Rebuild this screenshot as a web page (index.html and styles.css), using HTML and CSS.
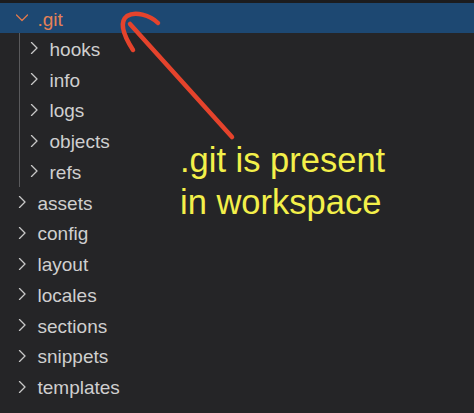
FILE: index.html
```html
<!DOCTYPE html>
<html>
<head>
<meta charset="utf-8">
<link rel="stylesheet" href="styles.css">
</head>
<body>
<div class="explorer">
  <div class="topstrip"></div>
  <div class="row level0 selected">
    <span class="twisty"><svg viewBox="0 0 12 12" width="12" height="12"><path d="M0.5 3 L6 8.5 L11.5 3" class="chev orange"/></svg></span>
    <span class="label git">.git</span>
  </div>
  <div class="children">
    <div class="row level1"><span class="twisty"><svg viewBox="0 0 12 12" width="12" height="12"><path d="M3.5 0.5 L9 6 L3.5 11.5" class="chev"/></svg></span><span class="label">hooks</span></div>
    <div class="row level1"><span class="twisty"><svg viewBox="0 0 12 12" width="12" height="12"><path d="M3.5 0.5 L9 6 L3.5 11.5" class="chev"/></svg></span><span class="label">info</span></div>
    <div class="row level1"><span class="twisty"><svg viewBox="0 0 12 12" width="12" height="12"><path d="M3.5 0.5 L9 6 L3.5 11.5" class="chev"/></svg></span><span class="label">logs</span></div>
    <div class="row level1"><span class="twisty"><svg viewBox="0 0 12 12" width="12" height="12"><path d="M3.5 0.5 L9 6 L3.5 11.5" class="chev"/></svg></span><span class="label">objects</span></div>
    <div class="row level1"><span class="twisty"><svg viewBox="0 0 12 12" width="12" height="12"><path d="M3.5 0.5 L9 6 L3.5 11.5" class="chev"/></svg></span><span class="label">refs</span></div>
  </div>
  <div class="row level0"><span class="twisty"><svg viewBox="0 0 12 12" width="12" height="12"><path d="M3.5 0.5 L9 6 L3.5 11.5" class="chev"/></svg></span><span class="label">assets</span></div>
  <div class="row level0"><span class="twisty"><svg viewBox="0 0 12 12" width="12" height="12"><path d="M3.5 0.5 L9 6 L3.5 11.5" class="chev"/></svg></span><span class="label">config</span></div>
  <div class="row level0"><span class="twisty"><svg viewBox="0 0 12 12" width="12" height="12"><path d="M3.5 0.5 L9 6 L3.5 11.5" class="chev"/></svg></span><span class="label">layout</span></div>
  <div class="row level0"><span class="twisty"><svg viewBox="0 0 12 12" width="12" height="12"><path d="M3.5 0.5 L9 6 L3.5 11.5" class="chev"/></svg></span><span class="label">locales</span></div>
  <div class="row level0"><span class="twisty"><svg viewBox="0 0 12 12" width="12" height="12"><path d="M3.5 0.5 L9 6 L3.5 11.5" class="chev"/></svg></span><span class="label">sections</span></div>
  <div class="row level0"><span class="twisty"><svg viewBox="0 0 12 12" width="12" height="12"><path d="M3.5 0.5 L9 6 L3.5 11.5" class="chev"/></svg></span><span class="label">snippets</span></div>
  <div class="row level0"><span class="twisty"><svg viewBox="0 0 12 12" width="12" height="12"><path d="M3.5 0.5 L9 6 L3.5 11.5" class="chev"/></svg></span><span class="label">templates</span></div>

  <svg class="arrow" viewBox="0 0 474 413" width="474" height="413">
    <path d="M232 137 L 130 24" />
    <path d="M133 50 C 124 36, 119 22, 127 16 C 135 11, 150 15, 158 23" />
  </svg>
  <div class="note">.git is present<br>in workspace</div>
</div>
</body>
</html>
```
FILE: styles.css
```css
html, body {
  margin: 0;
  padding: 0;
  background: #252527;
}
.explorer {
  position: relative;
  width: 474px;
  height: 413px;
  overflow: hidden;
  background: #252527;
  font-family: "Liberation Sans", Arial, sans-serif;
  font-size: 19px;
  color: #cfcfcf;
}
.topstrip {
  height: 3px;
  background: #1c1c1e;
}
.row {
  display: flex;
  align-items: center;
  height: 30.75px;
  gap: 9.5px;
}
.row.level0 {
  padding-left: 16px;
}
.row.level1 {
  padding-left: 8px;
}
.row.selected {
  background: #1d4872;
  height: 30px;
}
.twisty {
  width: 12px;
  height: 12px;
  display: flex;
}
.chev {
  fill: none;
  stroke: #c8c8c8;
  stroke-width: 1.3;
  stroke-linecap: round;
  stroke-linejoin: round;
}
.chev.orange {
  stroke: #e07a4c;
}
.label {
  line-height: 1;
  position: relative;
  top: 1px;
}
.label.git {
  color: #e58157;
}
.children {
  margin-left: 19px;
  border-left: 1px solid #5a5a5c;
}
.arrow {
  position: absolute;
  left: 0;
  top: 0;
}
.arrow path {
  fill: none;
  stroke: #e5432c;
  stroke-width: 4.5;
  stroke-linecap: round;
  stroke-linejoin: round;
}
.note {
  position: absolute;
  left: 180px;
  top: 139px;
  font-family: "Liberation Sans", Arial, sans-serif;
  font-size: 34.5px;
  line-height: 42px;
  color: #f3f04a;
  white-space: nowrap;
}
```
